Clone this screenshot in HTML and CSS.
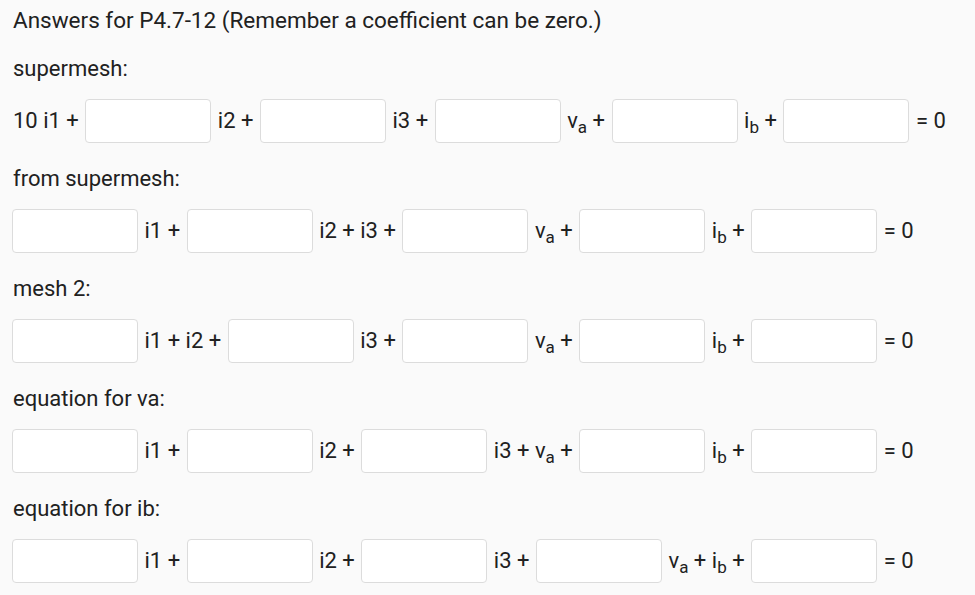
FILE: index.html
```html
<!DOCTYPE html>
<html>
<head>
<meta charset="utf-8">
<link rel="stylesheet" href="styles.css">
</head>
<body>
<main class="page">
  <p class="title">Answers for P4.7-12 (Remember a coefficient can be zero.)</p>

  <section class="eq">
    <p class="label">supermesh:</p>
    <div class="row">
      <span class="term">10 i1 +</span>
      <input class="box" type="text">
      <span class="term">i2 +</span>
      <input class="box" type="text">
      <span class="term">i3 +</span>
      <input class="box" type="text">
      <span class="term">v<sub>a</sub> +</span>
      <input class="box" type="text">
      <span class="term">i<sub>b</sub> +</span>
      <input class="box" type="text">
      <span class="term">= 0</span>
    </div>
  </section>

  <section class="eq">
    <p class="label">from supermesh:</p>
    <div class="row">
      <input class="box" type="text">
      <span class="term">i1 +</span>
      <input class="box" type="text">
      <span class="term">i2 + i3 +</span>
      <input class="box" type="text">
      <span class="term">v<sub>a</sub> +</span>
      <input class="box" type="text">
      <span class="term">i<sub>b</sub> +</span>
      <input class="box" type="text">
      <span class="term">= 0</span>
    </div>
  </section>

  <section class="eq">
    <p class="label">mesh 2:</p>
    <div class="row">
      <input class="box" type="text">
      <span class="term">i1 + i2 +</span>
      <input class="box" type="text">
      <span class="term">i3 +</span>
      <input class="box" type="text">
      <span class="term">v<sub>a</sub> +</span>
      <input class="box" type="text">
      <span class="term">i<sub>b</sub> +</span>
      <input class="box" type="text">
      <span class="term">= 0</span>
    </div>
  </section>

  <section class="eq">
    <p class="label">equation for va:</p>
    <div class="row">
      <input class="box" type="text">
      <span class="term">i1 +</span>
      <input class="box" type="text">
      <span class="term">i2 +</span>
      <input class="box" type="text">
      <span class="term">i3 + v<sub>a</sub> +</span>
      <input class="box" type="text">
      <span class="term">i<sub>b</sub> +</span>
      <input class="box" type="text">
      <span class="term">= 0</span>
    </div>
  </section>

  <section class="eq">
    <p class="label">equation for ib:</p>
    <div class="row">
      <input class="box" type="text">
      <span class="term">i1 +</span>
      <input class="box" type="text">
      <span class="term">i2 +</span>
      <input class="box" type="text">
      <span class="term">i3 +</span>
      <input class="box" type="text">
      <span class="term">v<sub>a</sub> + i<sub>b</sub> +</span>
      <input class="box" type="text">
      <span class="term">= 0</span>
    </div>
  </section>
</main>
</body>
</html>
```

FILE: styles.css
```css
html, body {
  margin: 0;
  padding: 0;
  background: #fafafa;
}

body {
  font-family: Roboto, "Liberation Sans", sans-serif;
  font-size: 22px;
  color: #212121;
}

.page {
  display: flex;
  flex-direction: column;
  gap: 23.5px;
  padding: 6.5px 12px 0 12px;
}

.title,
.label {
  margin: 0;
  line-height: 26px;
  padding-left: 1px;
}

.title {
  font-size: 22.5px;
}

.eq {
  display: flex;
  flex-direction: column;
  gap: 16.5px;
}

.row {
  display: flex;
  align-items: center;
  gap: 6.5px;
  height: 44px;
}

.row .term:first-child {
  padding-left: 1px;
}

.term {
  white-space: nowrap;
  line-height: 26px;
}

.term sub {
  font-size: 17px;
  vertical-align: -5px;
  line-height: 0;
}

.box {
  box-sizing: border-box;
  width: 126px;
  height: 44px;
  margin: 0;
  padding: 0 8px;
  border: 1px solid #dcdcdc;
  border-radius: 4px;
  background: #ffffff;
  font: inherit;
  outline: none;
}
```
